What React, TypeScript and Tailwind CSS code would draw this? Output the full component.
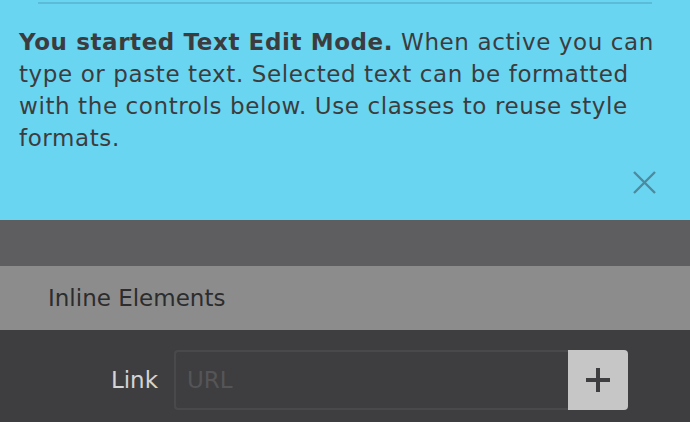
export default function App() {
  return (
    <div className="w-[690px] h-[422px] overflow-hidden bg-[#3e3e40] font-['DejaVu_Sans',sans-serif]">
      {/* Notice */}
      <div className="bg-[#6ad5f0] h-[220px] pt-[2px]">
        <div className="mx-[38px] h-[2px] bg-[#5cbcd8]" />
        <p className="pl-[19px] pr-[12px] pt-[22px] text-[23px] leading-[32px] tracking-[0.6px] text-[#3c3c3e]">
          <strong className="font-bold">You started Text Edit Mode.</strong> When active you can type or paste text.
          Selected text can be formatted with the controls below. Use classes to reuse style formats.
        </p>
        <div className="flex justify-end pr-[34px] pt-[17px]">
          <svg width="23" height="23" viewBox="0 0 23 23" className="text-[#4e8a9c]">
            <path d="M1 1L22 22M22 1L1 22" stroke="currentColor" strokeWidth="2.4" fill="none" />
          </svg>
        </div>
      </div>

      {/* Toolbar spacer */}
      <div className="h-[46px] bg-[#5e5e60]" />

      {/* Section header */}
      <div className="h-[64px] bg-[#8c8c8c] flex items-center pl-[48px] text-[23px] text-[#2c2c2e]">
        Inline Elements
      </div>

      {/* Link row */}
      <div className="flex items-center pt-[20px]">
        <label className="w-[158px] text-right text-[23px] text-[#d4d4d4]">Link</label>
        <div className="ml-[16px] flex h-[60px]">
          <input
            placeholder="URL"
            className="w-[394px] h-full bg-transparent border-2 border-r-0 border-[#49494b] rounded-l-[4px] px-[11px] text-[23px] text-[#d4d4d4] placeholder:text-[#555557] outline-none font-['DejaVu_Sans',sans-serif]"
          />
          <button className="w-[60px] h-full bg-[#c6c6c6] rounded-r-[4px] flex items-center justify-center">
            <svg width="24" height="24" viewBox="0 0 24 24" className="text-[#3e3e40]">
              <path d="M0 12H24M12 0V24" stroke="currentColor" strokeWidth="4" fill="none" />
            </svg>
          </button>
        </div>
      </div>
    </div>
  );
}
